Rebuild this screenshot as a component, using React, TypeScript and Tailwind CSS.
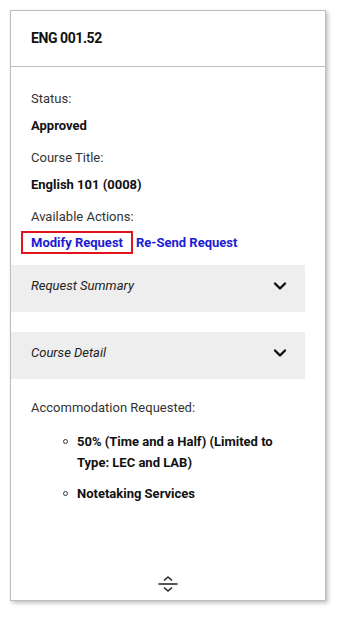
function Chevron() {
  return (
    <svg width="14" height="10" viewBox="0 0 14 10" fill="none">
      <path d="M2 2.5 L7 7.5 L12 2.5" stroke="#111" strokeWidth="2.4" strokeLinecap="round" strokeLinejoin="round" />
    </svg>
  );
}

function ExpandIcon() {
  return (
    <svg width="20" height="18" viewBox="0 0 20 18" fill="none">
      <path d="M6.5 5 L10 2 L13.5 5" stroke="#222" strokeWidth="1.6" strokeLinecap="round" strokeLinejoin="round" />
      <path d="M1 9 H19" stroke="#222" strokeWidth="1.6" strokeLinecap="round" />
      <path d="M6.5 13 L10 16 L13.5 13" stroke="#222" strokeWidth="1.6" strokeLinecap="round" strokeLinejoin="round" />
    </svg>
  );
}

function Band({ title }: { title: string }) {
  return (
    <div className="flex h-[47px] items-center justify-between bg-[#eeeeee] pb-[6px] pl-[20px] pr-[18px]">
      <span className="italic text-[13px] text-[#222]">{title}</span>
      <Chevron />
    </div>
  );
}

export default function App() {
  return (
    <div className="h-[617px] w-full bg-white pl-[10px] pt-[10px]" style={{ fontFamily: 'Roboto, "Liberation Sans", sans-serif' }}>
      <div className="flex h-[591px] w-[316px] flex-col border border-[#bdbdbd] bg-white shadow-[2px_2px_4px_rgba(0,0,0,0.25)]">
        <div className="flex h-[56px] shrink-0 items-center border-b border-[#bdbdbd] px-[20px]">
          <span className="text-[14px] font-bold tracking-[-0.03em] text-[#111]">ENG 001.52</span>
        </div>

        <div className="flex flex-1 flex-col pr-[20px] pt-[23px]">
          <div className="pl-[20px] text-[13px] leading-[17px]">
            <div className="text-[#333]">Status:</div>
            <div className="mt-[10px] font-bold text-[#111]">Approved</div>
            <div className="mt-[15px] text-[#333]">Course Title:</div>
            <div className="mt-[10px] font-bold text-[#111]">English 101 (0008)</div>
            <div className="mt-[15px] text-[#333]">Available Actions:</div>
          </div>
          <div className="mt-[6px] flex items-center pl-[10px] text-[13px] font-bold leading-[17px] text-[#1c1cd4]">
            <span className="border-2 border-[#e0141c] px-[8px] py-[1px]">Modify Request</span>
            <span className="ml-[3px]">Re-Send Request</span>
          </div>

          <div className="mt-[11px]">
            <Band title="Request Summary" />
          </div>
          <div className="mt-[20px]">
            <Band title="Course Detail" />
          </div>

          <div className="mt-[20px] pl-[20px] text-[13px] leading-[17px] text-[#333]">Accommodation Requested:</div>
          <ul className="mt-[15px] pl-[66px] text-[13px] font-bold leading-[21px] text-[#111]">
            <li className="relative">
              <span className="absolute left-[-14px] top-[8px] h-[5px] w-[5px] rounded-full border border-[#333]" />
              50% (Time and a Half) (Limited to Type: LEC and LAB)
            </li>
            <li className="relative mt-[10px]">
              <span className="absolute left-[-14px] top-[8px] h-[5px] w-[5px] rounded-full border border-[#333]" />
              Notetaking Services
            </li>
          </ul>

          <div className="mt-auto flex justify-center pb-[7px] pl-[20px]">
            <ExpandIcon />
          </div>
        </div>
      </div>
    </div>
  );
}
